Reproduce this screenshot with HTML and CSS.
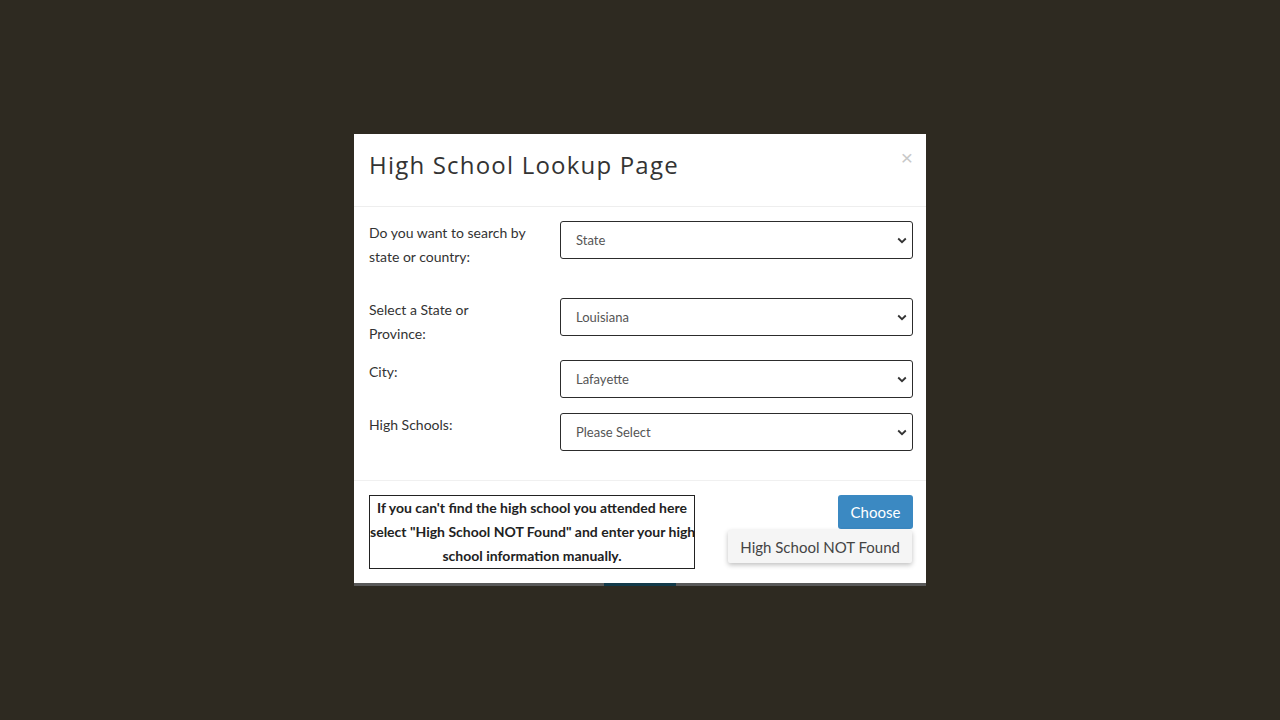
FILE: index.html
```html
<!DOCTYPE html>
<html>
<head>
<meta charset="utf-8">
<link rel="stylesheet" href="styles.css">
</head>
<body>
<div class="page">
  <div class="modal">
    <div class="modal-header">
      <h4 class="title">High School Lookup Page</h4>
      <span class="close">×</span>
    </div>
    <div class="modal-body">
      <div class="row row-first">
        <label class="label">Do you want to search by<br>state or country:</label>
        <div class="select"><span>State</span><svg class="chev" width="10" height="7" viewBox="0 0 10 7"><path d="M1.2 1.5 L5 5.2 L8.8 1.5" fill="none" stroke="#333" stroke-width="1.8"/></svg></div>
      </div>
      <div class="row">
        <label class="label">Select a State or<br>Province:</label>
        <div class="select"><span>Louisiana</span><svg class="chev" width="10" height="7" viewBox="0 0 10 7"><path d="M1.2 1.5 L5 5.2 L8.8 1.5" fill="none" stroke="#333" stroke-width="1.8"/></svg></div>
      </div>
      <div class="row">
        <label class="label">City:</label>
        <div class="select"><span>Lafayette</span><svg class="chev" width="10" height="7" viewBox="0 0 10 7"><path d="M1.2 1.5 L5 5.2 L8.8 1.5" fill="none" stroke="#333" stroke-width="1.8"/></svg></div>
      </div>
      <div class="row">
        <label class="label">High Schools:</label>
        <div class="select"><span>Please Select</span><svg class="chev" width="10" height="7" viewBox="0 0 10 7"><path d="M1.2 1.5 L5 5.2 L8.8 1.5" fill="none" stroke="#333" stroke-width="1.8"/></svg></div>
      </div>
    </div>
    <div class="modal-footer">
      <div class="note">If you can't find the high school you attended here<br>select "High School NOT Found" and enter your high<br>school information manually.</div>
      <div class="actions">
        <button class="btn-choose">Choose</button>
        <div class="menu">High School NOT Found</div>
      </div>
    </div>
  </div>
  <div class="under"><div class="under-seg"></div></div>
</div>
</body>
</html>
```

FILE: styles.css
```css
html, body {
  margin: 0;
  padding: 0;
  background: #2e2a21;
  width: 1280px;
  height: 720px;
  overflow: hidden;
}
.page {
  padding-top: 134px;
  display: flex;
  flex-direction: column;
  align-items: center;
}
.modal {
  width: 572px;
  background: #fff;
  font-family: Lato, "Liberation Sans", sans-serif;
  color: #333;
}
.modal-header {
  display: flex;
  justify-content: space-between;
  align-items: flex-start;
  padding: 10px 15px 20px 15px;
  border-bottom: 1px solid #eeeeee;
}
.title {
  margin: 0;
  font-family: "Open Sans", "Noto Sans", sans-serif;
  font-weight: 400;
  font-size: 24px;
  line-height: 42px;
  color: #333;
  letter-spacing: 1.2px;
}
.close {
  font-family: "Liberation Sans", sans-serif;
  font-size: 21px;
  line-height: 21px;
  color: #c8c8c8;
  margin-top: 3px;
  margin-right: -2px;
}
.modal-body {
  padding: 14px 13px 29px 15px;
}
.row {
  display: grid;
  grid-template-columns: 176px 1fr;
  column-gap: 15px;
  align-items: start;
  margin-top: 14px;
}
.row.row-first {
  margin-top: 0;
}
.row.row-first + .row {
  margin-top: 29px;
}
.row:last-child {
  margin-top: 15px;
}
.label {
  font-size: 14px;
  line-height: 24px;
  color: #333;
}
.select {
  height: 38px;
  box-sizing: border-box;
  border: 1px solid #2c2c2c;
  border-radius: 3px;
  display: flex;
  align-items: center;
  justify-content: space-between;
  padding: 0 5px 0 15px;
  font-size: 13px;
  color: #555;
  background: #fff;
}
.chev {
  display: block;
}
.modal-footer {
  border-top: 1px solid #f0f0f0;
  padding: 14px 13px 14px 15px;
  display: flex;
  justify-content: space-between;
  align-items: flex-start;
}
.note {
  width: 326px;
  box-sizing: border-box;
  border: 1px solid #222;
  text-align: center;
  font-weight: 700;
  font-size: 14px;
  line-height: 24px;
  color: #222;
  white-space: nowrap;
  letter-spacing: 0;
}
.actions {
  position: relative;
}
.btn-choose {
  display: block;
  width: 75px;
  height: 34px;
  border: none;
  border-radius: 3px;
  background: #3b89c2;
  color: #fff;
  font-family: Lato, "Liberation Sans", sans-serif;
  font-size: 15px;
  padding: 0;
}
.menu {
  position: absolute;
  right: 1px;
  top: 35px;
  height: 33px;
  box-sizing: border-box;
  padding: 0 12px;
  display: flex;
  align-items: center;
  white-space: nowrap;
  background: #f5f5f5;
  color: #444;
  font-size: 15px;
  border-radius: 2px;
  box-shadow: 0 2px 5px rgba(0, 0, 0, 0.25);
}
.under {
  width: 572px;
  height: 3px;
  background: #595959;
  display: flex;
}
.under-seg {
  margin-left: 250px;
  width: 72px;
  height: 3px;
  background: #123a4a;
}
```
